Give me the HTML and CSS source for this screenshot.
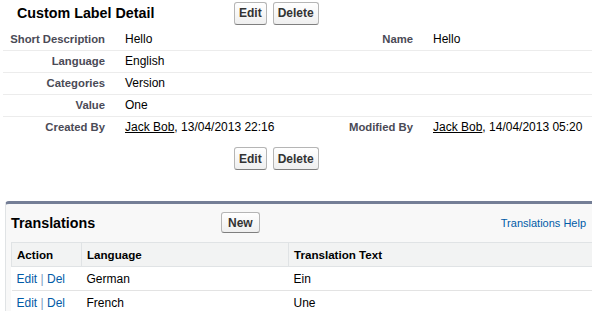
FILE: index.html
```html
<!DOCTYPE html>
<html>
<head>
  <meta charset="utf-8">
  <title>Custom Label Detail</title>
  <link rel="stylesheet" href="styles.css">
</head>
<body>
  <div class="detail">
    <div class="title-row">
      <h2 class="title">Custom Label Detail</h2>
      <div class="buttons">
        <button class="btn">Edit</button>
        <button class="btn">Delete</button>
      </div>
    </div>

    <div class="fields">
      <div class="label">Short Description</div>
      <div class="value">Hello</div>
      <div class="label">Name</div>
      <div class="value">Hello</div>

      <div class="label">Language</div>
      <div class="value">English</div>
      <div class="label"></div>
      <div class="value"></div>

      <div class="label">Categories</div>
      <div class="value">Version</div>
      <div class="label"></div>
      <div class="value"></div>

      <div class="label">Value</div>
      <div class="value">One</div>
      <div class="label"></div>
      <div class="value"></div>

      <div class="label last">Created By</div>
      <div class="value last"><a href="#" class="user">Jack Bob</a>, 13/04/2013 22:16</div>
      <div class="label last">Modified By</div>
      <div class="value last"><a href="#" class="user">Jack Bob</a>, 14/04/2013 05:20</div>
    </div>

    <div class="bottom-buttons">
      <button class="btn">Edit</button>
      <button class="btn">Delete</button>
    </div>
  </div>

  <div class="panel">
    <div class="panel-header">
      <h3 class="panel-title">Translations</h3>
      <button class="btn btn-new">New</button>
      <a href="#" class="help">Translations Help</a>
    </div>
    <table class="list">
      <tr class="head">
        <th class="col-action">Action</th>
        <th class="col-lang">Language</th>
        <th>Translation Text</th>
      </tr>
      <tr>
        <td><a href="#" class="act">Edit</a> <span class="sep">|</span> <a href="#" class="act">Del</a></td>
        <td>German</td>
        <td>Ein</td>
      </tr>
      <tr>
        <td><a href="#" class="act">Edit</a> <span class="sep">|</span> <a href="#" class="act">Del</a></td>
        <td>French</td>
        <td>Une</td>
      </tr>
    </table>
  </div>
</body>
</html>
```

FILE: styles.css
```css
html, body {
  overflow: hidden;
}
body {
  margin: 0;
  font-family: "Liberation Sans", Arial, sans-serif;
  font-size: 12px;
  color: #000;
  background: #fff;
}
.title-row {
  display: flex;
  align-items: center;
  height: 24px;
  padding-top: 1px;
}
.title {
  margin: 0;
  width: 217px;
  padding-left: 17px;
  font-size: 14.3px;
  font-weight: bold;
  color: #000;
}
.buttons,
.bottom-buttons {
  display: flex;
  gap: 6px;
}
.btn {
  font-family: "Liberation Sans", Arial, sans-serif;
  font-size: 12px;
  font-weight: bold;
  color: #333;
  height: 23px;
  padding: 0 4px;
  border: 1px solid #b5b5b5;
  border-bottom-color: #7f7f7f;
  border-radius: 3px;
  background: linear-gradient(to bottom, #ffffff, #efefef);
  cursor: pointer;
}
.fields {
  display: grid;
  grid-template-columns: 110px 195px 113px 1fr;
  margin-top: 4px;
  margin-left: 3px;
}
.label,
.value {
  height: 21px;
  line-height: 21px;
  border-bottom: 1px solid #ececec;
  white-space: nowrap;
}
.label {
  text-align: right;
  padding-right: 8px;
  font-size: 11.3px;
  font-weight: bold;
  color: #4a4a56;
}
.value {
  padding-left: 12px;
}
.label.last,
.value.last {
  border-bottom: none;
}
.user {
  color: #000;
}
.bottom-buttons {
  padding: 9px 0 0 234px;
}
.panel {
  margin: 31px -20px 0 5px;
  border-top: 3px solid #747e96;
  border-left: 1px solid #e0e3e5;
  border-top-left-radius: 4px;
  background: #f8f8f8;
  padding: 0 0 0 5px;
}
.panel-header {
  display: flex;
  align-items: center;
  height: 37px;
}
.panel-title {
  margin: 0;
  width: 210px;
  font-size: 14.3px;
  font-weight: bold;
}
.btn-new {
  height: 21px;
  padding: 0 6px;
}
.help {
  margin-left: auto;
  margin-right: 26px;
  font-size: 11px;
  color: #015ba7;
  text-decoration: none;
}
.list {
  width: 100%;
  border-collapse: collapse;
  background: #fff;
  margin-top: 1px;
}
.list th,
.list td {
  text-align: left;
  height: 23px;
  padding: 0 5px;
  border-bottom: 1px solid #e3e3e3;
}
.list th {
  background: #f2f3f3;
  font-size: 11.6px;
  font-weight: bold;
  border: 1px solid #e0e3e5;
}
.col-action {
  width: 59px;
}
.col-lang {
  width: 196px;
}
.act {
  color: #015ba7;
  text-decoration: none;
}
.sep {
  color: #7d9cc1;
}
```
